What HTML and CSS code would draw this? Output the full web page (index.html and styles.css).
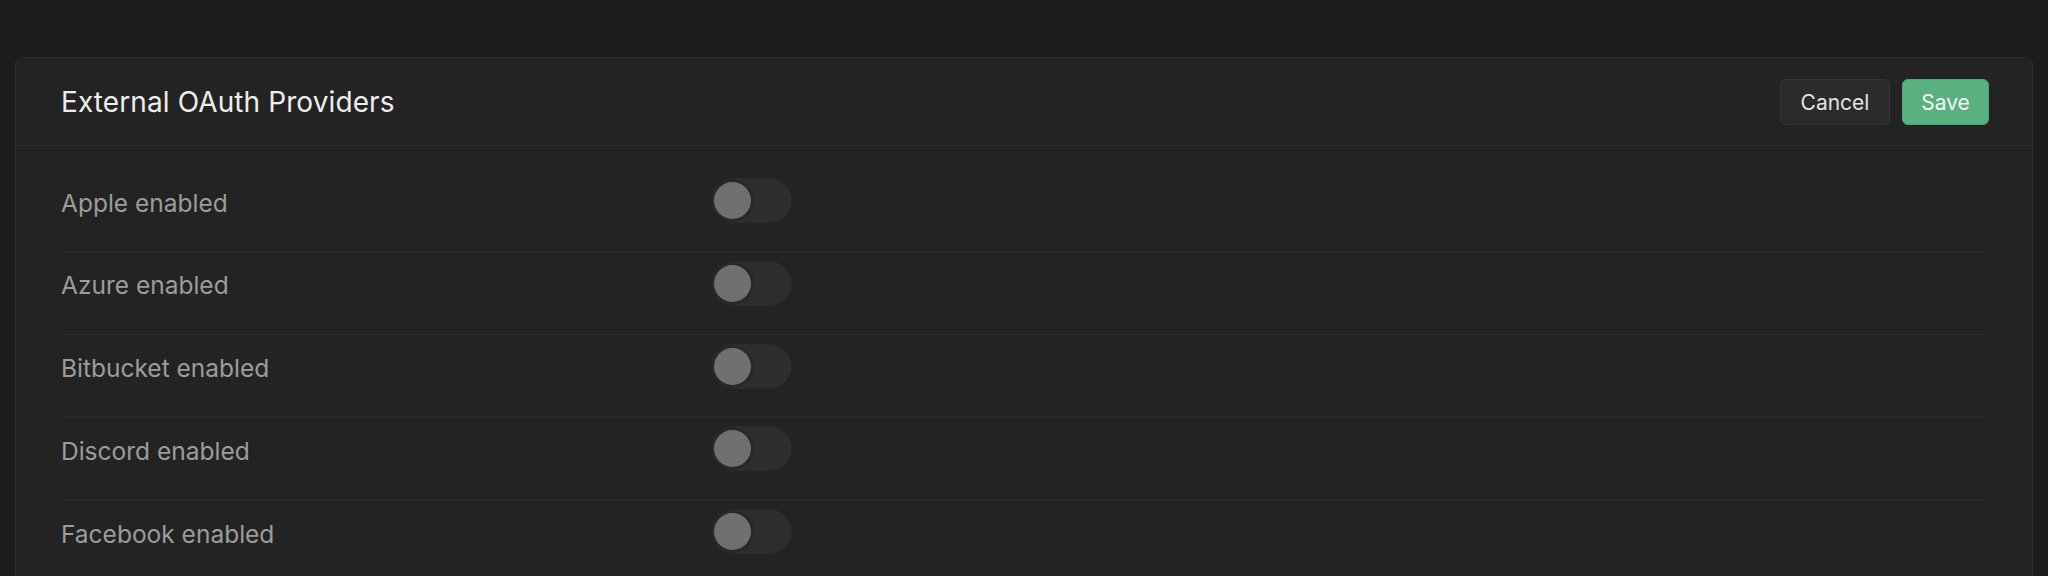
FILE: index.html
```html
<!DOCTYPE html>
<html lang="en">
<head>
    <meta charset="UTF-8">
    <meta name="viewport" content="width=device-width, initial-scale=1.0">
    <title>Auth settings - External OAuth Providers</title>
    <link rel="stylesheet" href="styles.css">
</head>
<body>

<div class="panel">
    <div class="panel-header">
        <h2>External OAuth Providers</h2>
        <div class="actions">
            <button class="btn btn-cancel">Cancel</button>
            <button class="btn btn-save">Save</button>
        </div>
    </div>

    <!-- providers list -->
    <div class="provider-list">
        <div class="provider-row">
            <label class="provider-label">Apple enabled</label>
            <div class="toggle"><span class="knob"></span></div>
        </div>
        <div class="provider-row">
            <label class="provider-label">Azure enabled</label>
            <div class="toggle"><span class="knob"></span></div>
        </div>
        <div class="provider-row">
            <label class="provider-label">Bitbucket enabled</label>
            <div class="toggle"><span class="knob"></span></div>
        </div>
        <div class="provider-row">
            <label class="provider-label">Discord enabled</label>
            <div class="toggle"><span class="knob"></span></div>
        </div>
        <div class="provider-row">
            <label class="provider-label">Facebook enabled</label>
            <div class="toggle"><span class="knob"></span></div>
        </div>
    </div>
</div>

</body>
</html>
```

FILE: styles.css
```css
body {
    font-family: Inter, "Liberation Sans", sans-serif;
    background-color: #1c1c1c;
    margin: 0;
    padding: 57px 15px 0;
    height: 576px;
    box-sizing: border-box;
    overflow: hidden;
}
.panel {
    background-color: #232323;
    border: 1px solid #2b2b2b;
    border-radius: 6px;
}
.panel-header {
    display: flex;
    align-items: center;
    justify-content: space-between;
    padding: 21px 43px 20px 45px;
    border-bottom: 1px solid #2b2b2b;
}
.panel-header h2 {
    margin: 0;
    font-size: 28px;
    font-weight: 400;
    color: #ededed;
    letter-spacing: 0.1px;
}
.actions {
    display: flex;
    gap: 12px;
}
.btn {
    font-family: inherit;
    font-size: 21px;
    height: 46px;
    border-radius: 6px;
    cursor: pointer;
}
.btn-cancel {
    width: 110px;
    background-color: #2a2a2a;
    border: 1px solid #363636;
    color: #e2e2e2;
}
.btn-save {
    width: 87px;
    background-color: #58b17e;
    border: 1px solid #4fa673;
    color: #f4f4f4;
}

/* rows */
.provider-list {
    padding: 23px 45px 0;
}
.provider-row {
    display: grid;
    grid-template-columns: 650px 1fr;
    align-items: center;
    padding: 9px 0 27.75px;
    border-bottom: 1px solid #2b2b2b;
}
.provider-label {
    font-size: 24.5px;
    color: #9c9c9c;
    padding-top: 4px;
}
.toggle {
    position: relative;
    width: 81px;
    height: 45px;
    box-sizing: border-box;
    border-radius: 23px;
    background-color: #2e2e2e;
    border: 1px solid #2a2a2a;
}
.knob {
    position: absolute;
    left: 2px;
    top: 3px;
    width: 37px;
    height: 37px;
    border-radius: 50%;
    background-color: #707070;
    box-shadow: 0 0 0 3px #282828;
}
```
